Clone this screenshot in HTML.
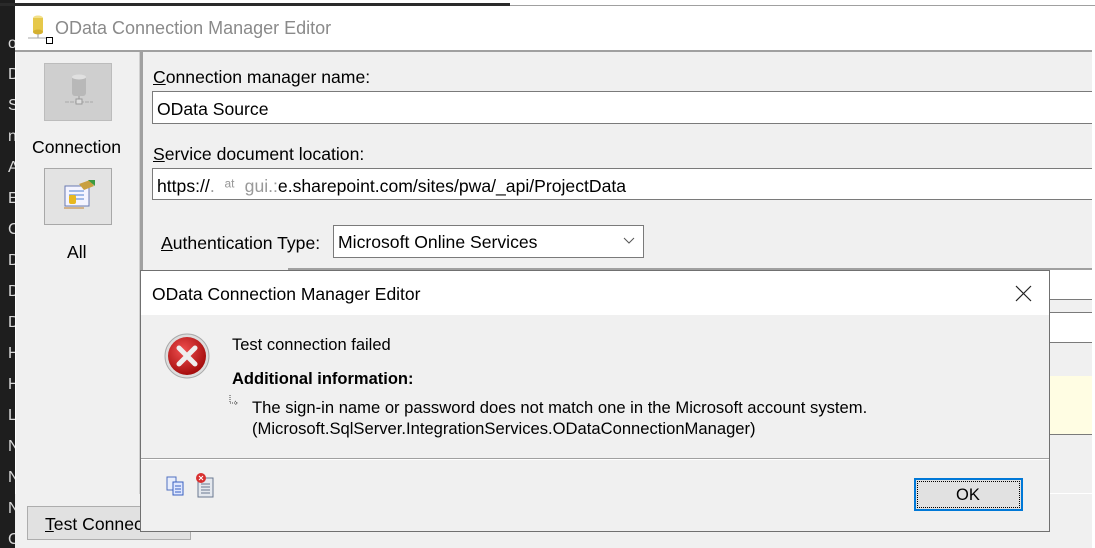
<!DOCTYPE html>
<html><head><meta charset="utf-8"><style>
*{margin:0;padding:0;box-sizing:border-box}
body{width:1095px;height:548px;overflow:hidden;background:#fff;font-family:"Liberation Sans",sans-serif;position:relative;color:#000}
.a{position:absolute;white-space:nowrap}
.t{font-size:17.6px}
u{text-decoration:underline}
</style></head><body>
<div class="a" style="left:0;top:0;width:15px;height:548px;background:#1e1e1e"></div>
<div class="a" style="left:0;top:3px;width:510px;height:3px;background:#2a2a2a"></div>
<div class="a" style="left:510px;top:5px;width:585px;height:1px;background:#a0a0a0"></div>
<div class="a" style="left:0;top:0;width:15px;height:548px;color:#d8d8d8;font-size:16px;line-height:31px;padding-top:28px;padding-left:8px;overflow:hidden">or<br>D<br>S<br>nr<br>A<br>E<br>C<br>D<br>D<br>D<br>H<br>H<br>L<br>N<br>N<br>N<br>C</div>
<div class="a" style="left:15px;top:6px;width:1080px;height:542px;background:#f0f0f0"></div>
<div class="a" style="left:15px;top:6px;width:1080px;height:44px;background:#fff"></div>
<svg class="a" style="left:26px;top:14px" width="28" height="30"><ellipse cx="12" cy="4" rx="5" ry="2.5" fill="#f2e08a"/><rect x="7" y="4" width="10" height="14" fill="#e6c84a"/><ellipse cx="12" cy="18" rx="5" ry="2.5" fill="#d4b030"/><line x1="12" y1="20" x2="12" y2="24" stroke="#999"/><line x1="2" y1="24" x2="20" y2="24" stroke="#aaa"/><rect x="20.5" y="23.5" width="6" height="6" fill="#fff" stroke="#000"/></svg>
<div class="a" style="left:55px;top:18px;font-size:18px;color:#8a8a8a">OData Connection Manager Editor</div>
<div class="a" style="left:15px;top:50px;width:1080px;height:2px;background:#a0a0a0"></div>
<div class="a" style="left:15px;top:52px;width:125px;height:442px;background:#f0f0f0;border-right:1px solid #d0d0d0;border-left:1px solid #fff"></div>
<div class="a" style="left:140px;top:52px;width:3px;height:460px;background:#a0a0a0"></div>
<div class="a" style="left:44px;top:63px;width:68px;height:58px;background:#cfcfcf;border:1px solid #bcbcbc"></div>
<svg class="a" style="left:62px;top:74px" width="34" height="36"><rect x="10" y="2" width="14" height="20" rx="3" fill="#b8b8b8"/><ellipse cx="17" cy="3" rx="7" ry="2.5" fill="#e0e0e0"/><line x1="17" y1="22" x2="17" y2="28" stroke="#999"/><line x1="3" y1="28" x2="31" y2="28" stroke="#aaa" stroke-dasharray="4 1"/><rect x="14" y="25" width="6" height="5" fill="#ddd" stroke="#999"/></svg>
<div class="a t" style="left:32px;top:137px">Connection</div>
<div class="a" style="left:44px;top:168px;width:68px;height:57px;background:#e3e3e3;border:1px solid #a8a8a8"></div>
<svg class="a" style="left:62px;top:178px" width="36" height="36"><rect x="3" y="8" width="24" height="20" fill="#f4f4ff" stroke="#6a7ab0"/><line x1="7" y1="13" x2="22" y2="13" stroke="#5080d0"/><line x1="7" y1="17" x2="22" y2="17" stroke="#5080d0"/><line x1="7" y1="21" x2="22" y2="21" stroke="#5080d0"/><path d="M17 6 L28 2 L32 8 L22 12Z" fill="#c8a040"/><path d="M26 2 L33 2 L33 8Z" fill="#3a9a40"/><rect x="7" y="17" width="7" height="9" rx="2" fill="#e8b820"/><line x1="2" y1="30" x2="22" y2="30" stroke="#c08030"/></svg>
<div class="a t" style="left:67px;top:242px">All</div>
<div class="a t" style="left:153px;top:67px"><u>C</u>onnection manager name:</div>
<div class="a" style="left:152px;top:91px;width:950px;height:33px;background:#fff;border:1px solid #7a7a7a"></div>
<div class="a t" style="left:157px;top:99px">OData Source</div>
<div class="a t" style="left:153px;top:144px"><u>S</u>ervice document location:</div>
<div class="a" style="left:152px;top:168px;width:950px;height:32px;background:#fff;border:1px solid #7a7a7a"></div>
<div class="a t" style="left:157px;top:176px">https://<span style="color:#999">.&nbsp;&nbsp;ᵃᵗ&nbsp;&nbsp;gui.:</span>e.sharepoint.com/sites/pwa/_api/ProjectData</div>
<div class="a t" style="left:161px;top:233px"><u>A</u>uthentication Type:</div>
<div class="a" style="left:333px;top:225px;width:311px;height:33px;background:#fff;border:1px solid #7a7a7a"></div>
<div class="a t" style="left:338px;top:232px">Microsoft Online Services</div>
<svg class="a" style="left:623px;top:237px" width="12" height="8"><path d="M1 1 L6 6 L11 1" fill="none" stroke="#555"/></svg>
<div class="a" style="left:288px;top:268px;width:807px;height:2px;background:#a0a0a0"></div>
<div class="a" style="left:1049px;top:270px;width:46px;height:29px;background:#fff"></div>
<div class="a" style="left:1049px;top:299px;width:43px;height:1px;background:#7a7a7a"></div>
<div class="a" style="left:1049px;top:312px;width:43px;height:1px;background:#7a7a7a"></div>
<div class="a" style="left:1049px;top:313px;width:43px;height:29px;background:#fff"></div>
<div class="a" style="left:1049px;top:342px;width:43px;height:1px;background:#7a7a7a"></div>
<div class="a" style="left:1049px;top:376px;width:43px;height:58px;background:#fffde3"></div>
<div class="a" style="left:1049px;top:434px;width:43px;height:1px;background:#7a7a7a"></div>
<div class="a" style="left:1049px;top:493px;width:43px;height:1px;background:#fff"></div>
<div class="a" style="left:1092px;top:6px;width:3px;height:542px;background:#fff"></div>
<div class="a" style="left:15px;top:494px;width:130px;height:54px;background:#f0f0f0"></div>
<div class="a" style="left:27px;top:506px;width:164px;height:34px;background:#e1e1e1;border:1px solid #adadad"></div>
<div class="a t" style="left:45px;top:514px"><u>T</u>est Connect</div>
<div class="a" style="left:140px;top:270px;width:910px;height:262px;background:#f0f0f0;border:1px solid #707070"></div>
<div class="a" style="left:141px;top:271px;width:908px;height:44px;background:#fff"></div>
<div class="a" style="left:152px;top:284px;font-size:17.5px">OData Connection Manager Editor</div>
<svg class="a" style="left:1015px;top:285px" width="17" height="17"><path d="M1 1 L16 16 M16 1 L1 16" stroke="#222" stroke-width="1.2"/></svg>
<svg class="a" style="left:163px;top:332px" width="48" height="48"><defs><radialGradient id="g" cx="0.4" cy="0.35" r="0.7"><stop offset="0" stop-color="#f05050"/><stop offset="1" stop-color="#a00808"/></radialGradient></defs><circle cx="24" cy="24" r="22" fill="#ddd" stroke="#aaa"/><circle cx="24" cy="24" r="19" fill="url(#g)"/><path d="M16 16 L32 32 M32 16 L16 32" stroke="#eee" stroke-width="5" stroke-linecap="round"/></svg>
<div class="a" style="left:232px;top:336px;font-size:16.5px">Test connection failed</div>
<div class="a" style="left:232px;top:370px;font-size:16.5px;font-weight:bold">Additional information:</div>
<svg class="a" style="left:229px;top:395px" width="14" height="12"><path d="M1 0 V8 H8 M6 6 L8 8 L6 10" fill="none" stroke="#444" stroke-dasharray="1 1"/></svg>
<div class="a" style="left:252px;top:397px;font-size:16.6px;line-height:21px">The sign-in name or password does not match one in the Microsoft account system.<br>(Microsoft.SqlServer.IntegrationServices.ODataConnectionManager)</div>
<div class="a" style="left:141px;top:458px;width:908px;height:2px;background:#a0a0a0;border-bottom:1px solid #fff"></div>
<svg class="a" style="left:165px;top:473px" width="56" height="26"><rect x="2" y="4" width="9" height="13" fill="#e8eefc" stroke="#5070c0"/><rect x="8" y="9" width="10" height="13" fill="#dfe7ff" stroke="#3a60c0"/><line x1="10" y1="13" x2="16" y2="13" stroke="#3a60c0"/><line x1="10" y1="16" x2="16" y2="16" stroke="#3a60c0"/><line x1="10" y1="19" x2="16" y2="19" stroke="#3a60c0"/><rect x="33" y="5" width="15" height="19" fill="#e4e8ee" stroke="#6a7890"/><line x1="36" y1="11" x2="45" y2="11" stroke="#6a7890"/><line x1="36" y1="14" x2="45" y2="14" stroke="#6a7890"/><line x1="36" y1="17" x2="45" y2="17" stroke="#6a7890"/><line x1="36" y1="20" x2="45" y2="20" stroke="#6a7890"/><circle cx="36" cy="5" r="5" fill="#d83030"/><path d="M34 3 L38 7 M38 3 L34 7" stroke="#fff"/></svg>
<div class="a" style="left:914px;top:478px;width:109px;height:33px;background:#e1e1e1;border:2px solid #0078d7"></div>
<div class="a" style="left:917px;top:481px;width:103px;height:27px;border:1px dotted #000"></div>
<div class="a" style="left:956px;top:486px;font-size:16.5px">OK</div>
</body></html>
